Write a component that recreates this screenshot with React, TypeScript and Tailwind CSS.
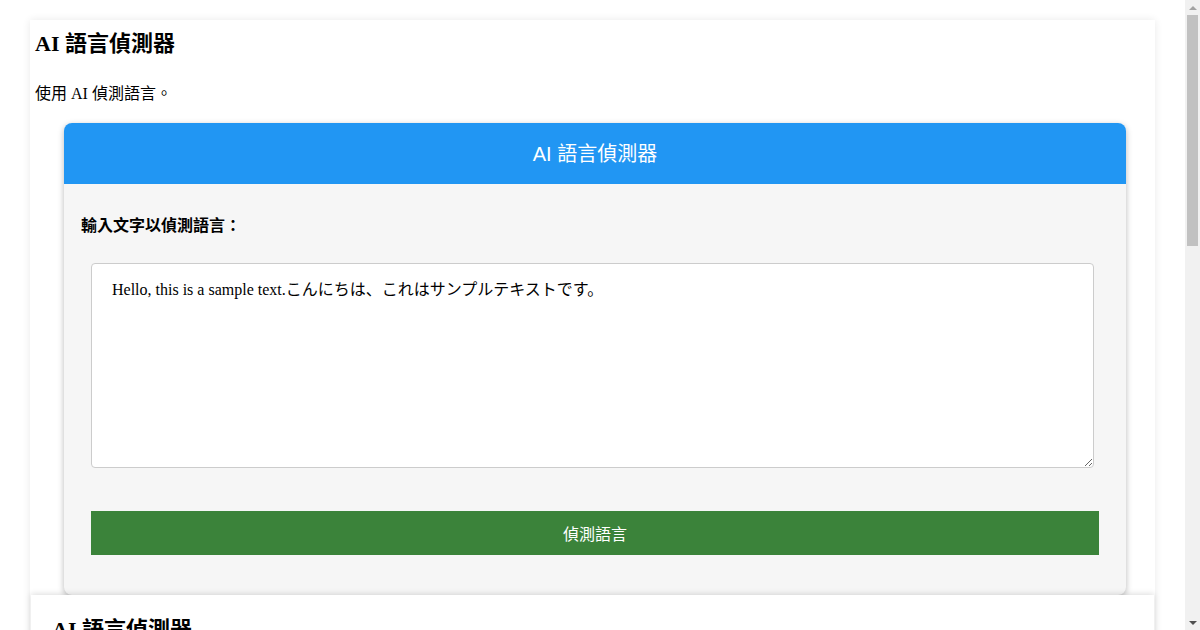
import { useState } from "react";

const serif = "font-['Liberation_Serif','Noto_Sans_CJK_TC',serif]";
const sans = "font-['Liberation_Sans','Noto_Sans_CJK_TC',sans-serif]";

function DetectorCard() {
  const [text, setText] = useState("Hello, this is a sample text.こんにちは、これはサンプルテキストです。");

  return (
    <div className="ml-[29px] w-[1062px] overflow-hidden rounded-lg bg-[#f6f6f6] shadow-[0_2px_6px_rgba(0,0,0,0.28)]">
      <div className={`flex h-[61px] items-center justify-center bg-[#2196f3] text-[20px] text-white ${sans}`}>
        AI 語言偵測器
      </div>
      <div className="px-[17px] pt-[32px] pb-[40px]">
        <label className={`block text-[16px] leading-[20px] font-bold text-black ${sans}`}>
          輸入文字以偵測語言：
        </label>
        <textarea
          value={text}
          onChange={(e) => setText(e.target.value)}
          className="mt-[27px] ml-[10px] block h-[205px] w-[1003px] rounded border border-[#cccccc] bg-white px-5 pt-[16px] text-[16px] leading-[20px] text-black outline-none font-['Liberation_Serif','Noto_Sans_CJK_JP',serif]"
        />
        <button
          type="button"
          className={`mt-[43px] ml-[10px] block h-[44px] w-[1008px] bg-[#3b833a] pt-[3px] text-[16px] text-white ${sans}`}
        >
          偵測語言
        </button>
      </div>
    </div>
  );
}

// stand-in for the browser's classic scrollbar
function ScrollBar() {
  return (
    <div className="flex h-[630px] w-[15px] shrink-0 flex-col items-center bg-[#f1f1f1]">
      <div className="flex h-[15px] items-center justify-center">
        <div className="h-0 w-0 border-x-[4px] border-b-[4px] border-x-transparent border-b-[#a3a3a3]" />
      </div>
      <div className="h-[231px] w-[11px] bg-[#c1c1c1]" />
      <div className="flex-1" />
      <div className="flex h-[15px] items-center justify-center">
        <div className="h-0 w-0 border-x-[4px] border-t-[4px] border-x-transparent border-t-[#505050]" />
      </div>
    </div>
  );
}

export default function App() {
  return (
    <div className="flex h-[630px] overflow-hidden bg-white">
      <div className="h-[630px] flex-1 overflow-hidden">
        <div className="px-[30px] pt-5">
          <div className="bg-white px-[5px] pt-[10px] shadow-[0_0_8px_rgba(0,0,0,0.09)]">
            <h1 className={`text-[22px] leading-[28px] font-bold text-black ${serif}`}>AI 語言偵測器</h1>
            <p className={`mt-[26px] text-[16px] leading-[20px] text-black ${serif}`}>使用 AI 偵測語言。</p>
            <div className="mt-[19px]">
              <DetectorCard />
            </div>
            <div className="-mx-[4px] h-[200px] bg-white px-[21px] pt-[21px] shadow-[0_-1px_6px_rgba(0,0,0,0.14)]">
              <h1 className={`text-[22px] leading-[28px] font-bold text-black ${serif}`}>AI 語言偵測器</h1>
            </div>
          </div>
        </div>
      </div>
      <ScrollBar />
    </div>
  );
}
